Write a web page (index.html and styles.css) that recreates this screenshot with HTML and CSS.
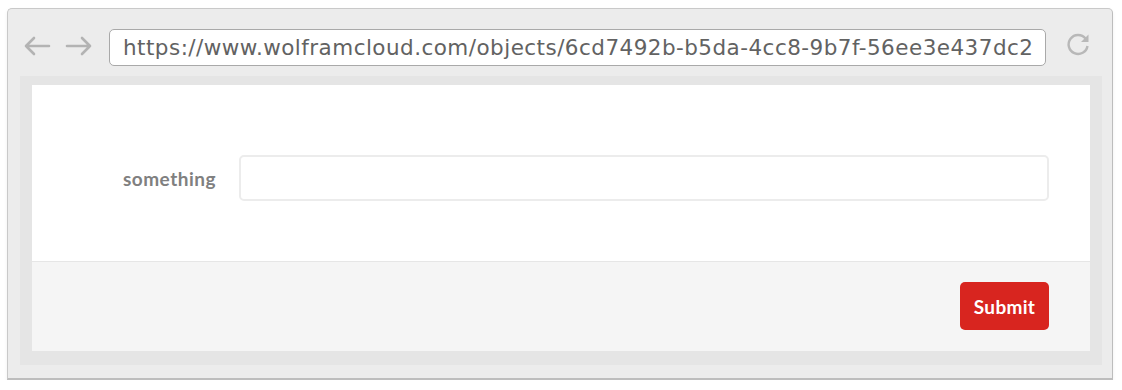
FILE: index.html
```html
<!DOCTYPE html>
<html>
<head>
<meta charset="utf-8">
<link rel="stylesheet" href="styles.css">
</head>
<body>
<div class="window">
  <div class="toolbar">
    <div class="nav">
      <svg class="arrow" width="28" height="20" viewBox="0 0 28 20"><path d="M26 10H3M11 2L3 10L11 18" fill="none" stroke="#b3b3b3" stroke-width="2.6" stroke-linecap="round" stroke-linejoin="round"/></svg>
      <svg class="arrow" width="28" height="20" viewBox="0 0 28 20"><path d="M2 10H25M17 2L25 10L17 18" fill="none" stroke="#b3b3b3" stroke-width="2.6" stroke-linecap="round" stroke-linejoin="round"/></svg>
    </div>
    <div class="url">https://www.wolframcloud.com/objects/6cd7492b-b5da-4cc8-9b7f-56ee3e437dc2</div>
    <svg class="reload" width="26" height="26" viewBox="0 0 26 26"><path d="M20.5 6.5A9.5 9.5 0 1 0 22.5 14" fill="none" stroke="#b8b8b8" stroke-width="2.4"/><path d="M23.5 2.5V10H16Z" fill="#b8b8b8"/></svg>
  </div>
  <div class="frame">
    <div class="panel">
      <div class="form">
        <div class="row">
          <label class="label">something</label>
          <div class="input"></div>
        </div>
      </div>
      <div class="footer">
        <button class="submit">Submit</button>
      </div>
    </div>
  </div>
</div>
</body>
</html>
```
FILE: styles.css
```css
html, body {
  margin: 0;
  padding: 0;
  background: #ffffff;
}
.window {
  box-sizing: border-box;
  margin: 8px 0 0 7px;
  width: 1106px;
  height: 372px;
  border: 1px solid #c9c9c9;
  border-bottom: 2px solid #bdbdbd;
  border-right-color: #bdbdbd;
  border-radius: 5px 5px 0 0;
  background: #ececec;
  display: flex;
  flex-direction: column;
  box-shadow: 0 2px 4px rgba(0,0,0,0.06);
}
.toolbar {
  height: 67px;
  display: flex;
  align-items: center;
  padding-top: 10px;
  box-sizing: border-box;
}
.nav {
  display: flex;
  gap: 14px;
  margin-left: 15px;
  margin-top: -3px;
  width: 86px;
}
.url {
  box-sizing: border-box;
  width: 937px;
  height: 37px;
  border: 1px solid #a9a9a9;
  border-radius: 5px;
  background: #ffffff;
  font-family: "DejaVu Sans", "Liberation Sans", sans-serif;
  font-size: 21.5px;
  letter-spacing: 0.46px;
  color: #626262;
  line-height: 35px;
  padding-left: 13px;
  white-space: nowrap;
  overflow: hidden;
}
.reload {
  margin-left: 19px;
  margin-top: -5px;
}
.frame {
  flex: 1;
  margin: 0 10px 13px 12px;
  background: #e5e5e5;
  padding: 9px 12px 14px 12px;
  display: flex;
}
.panel {
  flex: 1;
  background: #ffffff;
  display: flex;
  flex-direction: column;
}
.form {
  height: 177px;
  box-sizing: border-box;
  padding-top: 70px;
  border-bottom: 1px solid #e6e6e6;
}
.row {
  display: flex;
  align-items: center;
}
.label {
  width: 184px;
  text-align: right;
  font-family: Lato, "Open Sans", sans-serif;
  font-weight: 700;
  font-size: 19px;
  letter-spacing: 0.5px;
  color: #808080;
  margin-right: 23px;
}
.input {
  box-sizing: border-box;
  width: 810px;
  height: 46px;
  border: 2px solid #ececec;
  border-radius: 5px;
  background: #fff;
}
.footer {
  flex: 1;
  background: #f5f5f5;
  display: flex;
  justify-content: flex-end;
  align-items: flex-start;
  padding: 20px 41px 0 0;
}
.submit {
  width: 89px;
  height: 48px;
  border: none;
  border-radius: 5px;
  background: #d8251f;
  color: #ffffff;
  font-family: Lato, "Open Sans", sans-serif;
  font-weight: 700;
  font-size: 19px;
  letter-spacing: 0.3px;
  padding: 0;
}
```
